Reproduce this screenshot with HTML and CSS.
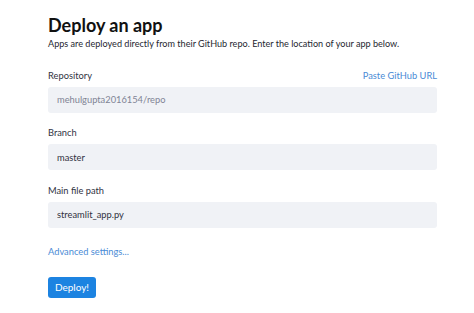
FILE: index.html
```html
<!DOCTYPE html>
<html lang="en">
<head>
    <meta charset="UTF-8">
    <meta name="viewport" content="width=device-width, initial-scale=1.0">
    <title>Deploy an app</title>
    <link rel="stylesheet" href="styles.css">
</head>
<body>
    <div class="deploy">
        <h1>Deploy an app</h1>
        <p class="intro">Apps are deployed directly from their GitHub repo. Enter the location of your app below.</p>

        <div class="field">
            <div class="field-head">
                <label for="repo">Repository</label>
                <a href="#" class="link">Paste GitHub URL</a>
            </div>
            <input type="text" id="repo" placeholder="mehulgupta2016154/repo">
        </div>

        <div class="field">
            <div class="field-head">
                <label for="branch">Branch</label>
            </div>
            <input type="text" id="branch" value="master">
        </div>

        <div class="field">
            <div class="field-head">
                <label for="path">Main file path</label>
            </div>
            <input type="text" id="path" value="streamlit_app.py">
        </div>

        <a href="#" class="link advanced">Advanced settings...</a>

        <button type="button">Deploy!</button>
    </div>
</body>
</html>
```

FILE: styles.css
```css
* {
    box-sizing: border-box;
    margin: 0;
    padding: 0;
    font-family: Lato, 'Noto Sans', sans-serif;
}

body {
    background: #fff;
    color: #262730;
}

.deploy {
    width: 389px;
    margin-left: 48px;
    padding-top: 13px;
    display: flex;
    flex-direction: column;
}

h1 {
    font-size: 18px;
    font-weight: 700;
    line-height: 24px;
    color: #111;
}

.intro {
    font-size: 9.1px;
    line-height: 14px;
    white-space: nowrap;
    color: #262730;
}

.field {
    margin-top: 12.5px;
}

.intro + .field {
    margin-top: 16.5px;
}

.field-head {
    display: flex;
    justify-content: space-between;
    align-items: center;
    height: 15px;
    margin-bottom: 4px;
}

label {
    font-size: 9.3px;
    color: #31333f;
}

.link {
    font-size: 9.3px;
    color: #4a8bd6;
    text-decoration: none;
}

input {
    width: 100%;
    height: 26px;
    border: none;
    border-radius: 3px;
    background: #f0f2f6;
    padding: 0 9px;
    font-size: 9.3px;
    color: #31333f;
    outline: none;
}

input::placeholder {
    color: #808495;
}

.advanced {
    margin-top: 16.5px;
    line-height: 15px;
    align-self: flex-start;
}

button {
    align-self: flex-start;
    margin-top: 17.5px;
    width: 48px;
    height: 21px;
    border: none;
    border-radius: 3px;
    background: #1c83e1;
    color: #fff;
    font-size: 10px;
    cursor: pointer;
}
```
